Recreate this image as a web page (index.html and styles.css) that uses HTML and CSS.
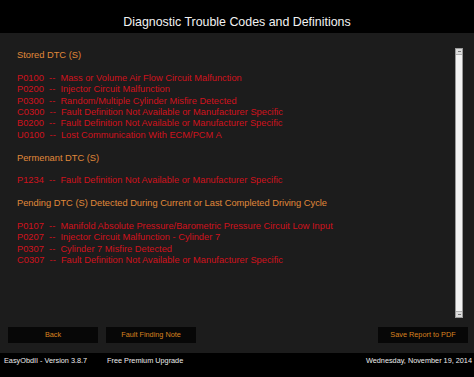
FILE: index.html
```html
<!DOCTYPE html>
<html lang="en">
<head>
    <meta charset="UTF-8">
    <meta name="viewport" content="width=device-width, initial-scale=1.0">
    <title>Diagnostic Trouble Codes</title>
    <link rel="stylesheet" href="styles.css">
</head>
<body>
    <div class="heading">Diagnostic Trouble Codes and Definitions</div>
    <div class="main">
        <div class="report-row">
            <div class="report">
                <div class="section">
                    <div class="section-title">Stored DTC (S)</div>
                    <div class="code">P0100  --  Mass or Volume Air Flow Circuit Malfunction</div>
                    <div class="code">P0200  --  Injector Circuit Malfunction</div>
                    <div class="code">P0300  --  Random/Multiple Cylinder Misfire Detected</div>
                    <div class="code">C0300  --  Fault Definition Not Available or Manufacturer Specific</div>
                    <div class="code">B0200  --  Fault Definition Not Available or Manufacturer Specific</div>
                    <div class="code">U0100  --  Lost Communication With ECM/PCM A</div>
                </div>
                <div class="section">
                    <div class="section-title">Permenant DTC (S)</div>
                    <div class="code">P1234  --  Fault Definition Not Available or Manufacturer Specific</div>
                </div>
                <div class="section">
                    <div class="section-title">Pending DTC (S) Detected During Current or Last Completed Driving Cycle</div>
                    <div class="code">P0107  --  Manifold Absolute Pressure/Barometric Pressure Circuit Low Input</div>
                    <div class="code">P0207  --  Injector Circuit Malfunction - Cylinder 7</div>
                    <div class="code">P0307  --  Cylinder 7 Misfire Detected</div>
                    <div class="code">C0307  --  Fault Definition Not Available or Manufacturer Specific</div>
                </div>
            </div>
            <div class="scrollbar">
                <div class="scroll-arrow"><span></span></div>
                <div class="scroll-track"></div>
                <div class="scroll-arrow"><span></span></div>
            </div>
        </div>
        <div class="buttons">
            <button class="btn">Back</button>
            <button class="btn">Fault Finding Note</button>
            <div class="spacer"></div>
            <button class="btn">Save Report to PDF</button>
        </div>
    </div>
    <div class="footer">
        <span class="version">EasyObdII - Version 3.8.7</span>
        <span class="upgrade">Free Premium Upgrade</span>
        <span class="date">Wednesday, November 19, 2014</span>
    </div>
</body>
</html>
```

FILE: styles.css
```css
body {
    margin: 0;
    padding: 0;
    width: 474px;
    height: 377px;
    background: #000;
    display: flex;
    flex-direction: column;
    font-family: 'Liberation Sans', Arial, sans-serif;
    overflow: hidden;
}
.heading {
    height: 33px;
    box-sizing: border-box;
    padding-top: 15px;
    line-height: 15px;
    font-size: 12.4px;
    color: #f2f2f2;
    text-align: center;
    background: #000;
}
.main {
    height: 320px;
    background: #1c1c1c;
    display: flex;
    flex-direction: column;
}
.report-row {
    flex: 1;
    display: flex;
    min-height: 0;
}
.report {
    flex: 1;
    padding: 17px 0 0 17px;
    font-size: 9.3px;
    line-height: 11.4px;
}
.section {
    margin-bottom: 11.4px;
}
.section-title {
    color: #e0893a;
    margin-bottom: 11.4px;
}
.code {
    color: #d0121c;
    white-space: pre;
}
.scrollbar {
    width: 6px;
    margin: 15px 11px 9px 0;
    border: 1px solid #9a9a9a;
    background: #ececec;
    display: flex;
    flex-direction: column;
}
.scroll-arrow {
    height: 5px;
    background: #dcdcdc;
    border-top: 1px solid #b0b0b0;
    border-bottom: 1px solid #b0b0b0;
    display: flex;
    align-items: center;
    justify-content: center;
}
.scroll-arrow:first-child {
    border-top: none;
}
.scroll-arrow:last-child {
    border-bottom: none;
}
.scroll-arrow span {
    width: 3px;
    height: 1px;
    background: #777;
}
.scroll-track {
    flex: 1;
    background: #f2f2f2;
}
.buttons {
    display: flex;
    gap: 8px;
    padding: 0 6px 10px 8px;
}
.spacer {
    flex: 1;
}
.btn {
    width: 90px;
    height: 16px;
    padding: 0;
    border: none;
    background: #070707;
    color: #d9821f;
    font-family: 'Liberation Sans', Arial, sans-serif;
    font-size: 7.3px;
    line-height: 16px;
    text-align: center;
}
.footer {
    height: 24px;
    display: flex;
    padding: 0 2px 0 4px;
    font-size: 7.3px;
    line-height: 16px;
    color: #ececec;
    background: #000;
}
.version {
    width: 103px;
}
.upgrade {
    flex: 1;
}
```
